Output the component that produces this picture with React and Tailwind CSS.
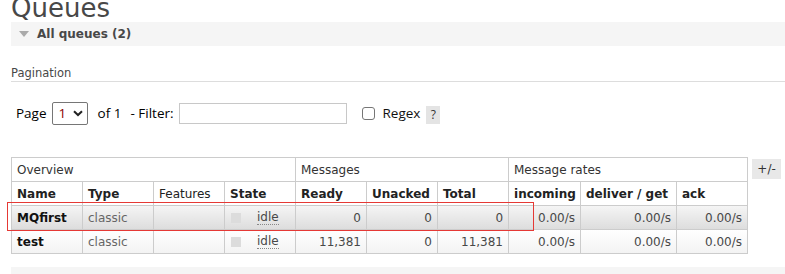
import React from "react";

const F = { fontFamily: '"DejaVu Sans", Verdana, sans-serif' };

const rows = [
  { name: "MQfirst", ready: "0", unacked: "0", total: "0", hl: true },
  { name: "test", ready: "11,381", unacked: "0", total: "11,381", hl: false },
];

export default function App() {
  return (
    <div className="w-[785px] h-[274px] overflow-hidden bg-white text-[#484848]" style={F}>
      <div className="pl-[11px]">
        <h1 className="text-[26px] leading-[26px] mt-[-5px] mb-[1px] font-normal text-[#484848]">Queues</h1>
        <div className="h-[24px] bg-[#f5f5f5] flex items-center pl-[8px]">
          <div className="w-0 h-0 border-l-[5px] border-r-[5px] border-t-[6px] border-l-transparent border-r-transparent border-t-[#aaa] mr-[8px]" />
          <span className="text-[12px] font-bold text-[#484848]">All queues (2)</span>
        </div>
        <div className="mt-[20px] h-[16px] border-b border-[#ddd] text-[11.5px] leading-[14px] text-[#484848]">Pagination</div>
        <div
          className="mt-[19px] flex items-center h-[24px] text-[13.5px] text-black"
          style={{ fontFamily: '"Open Sans", "Noto Sans", sans-serif' }}
        >
          <span className="ml-[5px]">Page</span>
          <div className="ml-[5px] w-[36px] h-[23px] border border-[#767676] rounded-[2px] flex items-center pl-[6px] gap-[7px]">
            <span className="text-[#8b0000]">1</span>
            <svg width="10" height="7" viewBox="0 0 10 7">
              <path d="M1 1.2 L5 5 L9 1.2" fill="none" stroke="#222" strokeWidth="2" />
            </svg>
          </div>
          <span className="ml-[10px]">of 1</span>
          <span className="ml-[9px]">- Filter:</span>
          <div className="ml-[5px] w-[168px] h-[21px] border border-[#c8c8c8] bg-white" />
          <div className="ml-[15px] w-[13px] h-[13px] border border-[#767676] rounded-[3px] bg-white" />
          <span className="ml-[8px] text-[#111]">Regex</span>
          <span className="ml-[6px] w-[14px] h-[18px] mt-[3px] bg-[#e4e4e4] flex items-center justify-center text-[12px] text-[#333]">?</span>
        </div>
        <div className="mt-[32px] flex items-start relative">
          <table className="border-collapse text-[12px] border border-[#ccc] w-[737px] table-fixed">
            <colgroup>
              <col className="w-[71px]" />
              <col className="w-[71px]" />
              <col className="w-[71px]" />
              <col className="w-[71px]" />
              <col className="w-[71px]" />
              <col className="w-[71px]" />
              <col className="w-[71px]" />
              <col className="w-[72px]" />
              <col className="w-[96px]" />
              <col className="w-[71px]" />
            </colgroup>
            <thead>
              <tr className="h-[24px]">
                <th colSpan={4} className="border border-[#ccc] text-left font-normal px-[5px] p-0 text-[#333]">Overview</th>
                <th colSpan={3} className="border border-[#ccc] text-left font-normal px-[5px] text-[#333]">Messages</th>
                <th colSpan={3} className="border border-[#ccc] text-left font-normal px-[5px] text-[#333]">Message rates</th>
              </tr>
              <tr className="h-[24px] text-[#222]">
                <th className="border border-[#ccc] text-left font-bold px-[5px]">Name</th>
                <th className="border border-[#ccc] text-left font-bold px-[5px]">Type</th>
                <th className="border border-[#ccc] text-left font-normal px-[5px]">Features</th>
                <th className="border border-[#ccc] text-left font-bold px-[5px]">State</th>
                <th className="border border-[#ccc] text-left font-bold px-[5px]">Ready</th>
                <th className="border border-[#ccc] text-left font-bold px-[5px]">Unacked</th>
                <th className="border border-[#ccc] text-left font-bold px-[5px]">Total</th>
                <th className="border border-[#ccc] text-left font-bold px-[5px] whitespace-nowrap">incoming</th>
                <th className="border border-[#ccc] text-left font-bold px-[5px] whitespace-nowrap">deliver / get</th>
                <th className="border border-[#ccc] text-left font-bold px-[5px]">ack</th>
              </tr>
            </thead>
            <tbody>
              {rows.map((r) => (
                <tr
                  key={r.name}
                  className={
                    "h-[24px] " +
                    (r.hl
                      ? "bg-gradient-to-b from-[#f5f5f5] to-[#dcdcdc]"
                      : "bg-gradient-to-b from-white to-[#f3f3f3]")
                  }
                >
                  <td className="border border-[#ccc] px-[5px] font-bold text-[#111]">{r.name}</td>
                  <td className="border border-[#ccc] px-[5px] text-[#666]">classic</td>
                  <td className="border border-[#ccc] px-[5px]"></td>
                  <td className="border border-[#ccc] px-[6px]">
                    <div className="flex items-center">
                      <div className="w-[10px] h-[10px] bg-[#dcdcdc]" />
                      <span className="ml-[16px] border-b border-dotted border-[#888] leading-[13px] text-[#484848]">idle</span>
                    </div>
                  </td>
                  <td className="border border-[#ccc] px-[5px] text-right">{r.ready}</td>
                  <td className="border border-[#ccc] px-[5px] text-right">{r.unacked}</td>
                  <td className="border border-[#ccc] px-[5px] text-right">{r.total}</td>
                  <td className="border border-[#ccc] px-[5px] text-right">0.00/s</td>
                  <td className="border border-[#ccc] px-[5px] text-right">0.00/s</td>
                  <td className="border border-[#ccc] px-[5px] text-right">0.00/s</td>
                </tr>
              ))}
            </tbody>
          </table>
          <div className="ml-[4px] mt-[2px] w-[29px] h-[20px] bg-[#e8e8e8] flex items-center justify-center text-[12px] text-[#333]">+/-</div>
          <div className="absolute left-[-4px] top-[45px] w-[527px] h-[29px] border border-[#e53935] pointer-events-none" />
        </div>
        <div className="mt-[13px] h-[10px] bg-[#f5f5f5]" />
      </div>
    </div>
  );
}
